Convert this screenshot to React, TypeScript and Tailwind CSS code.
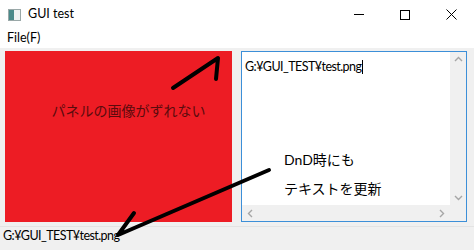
import React from "react";

const font = { fontFamily: 'Lato, "Noto Sans CJK JP", sans-serif' };

function TitleBar() {
  return (
    <div className="flex h-[29px] items-center bg-white">
      <div className="ml-[8px] flex h-[12px] w-[13px] items-stretch border border-[#9aa8a8] bg-[#dfe6e6]">
        <div className="w-[5px] bg-[#4a8a8a]" />
        <div className="flex-1 bg-[#eef2f2]" />
      </div>
      <span className="ml-[7px] text-[12.5px] text-black">GUI test</span>
      <div className="ml-auto flex h-full items-center">
        <div className="flex w-[46px] justify-center">
          <div className="h-px w-[10px] bg-black" />
        </div>
        <div className="flex w-[46px] justify-center">
          <div className="h-[10px] w-[10px] border border-black" />
        </div>
        <div className="flex w-[46px] justify-center">
          <svg width="11" height="11" viewBox="0 0 11 11">
            <path d="M0.5 0.5 L10.5 10.5 M10.5 0.5 L0.5 10.5" stroke="#000" strokeWidth="1" />
          </svg>
        </div>
      </div>
    </div>
  );
}

function Chevron({ dir }: { dir: "up" | "down" | "left" | "right" }) {
  const d = {
    up: "M1 6 L4.5 2.5 L8 6",
    down: "M1 3 L4.5 6.5 L8 3",
    left: "M6 1 L2.5 4.5 L6 8",
    right: "M3 1 L6.5 4.5 L3 8",
  }[dir];
  return (
    <svg width="9" height="9" viewBox="0 0 9 9">
      <path d={d} fill="none" stroke="#a6a6a6" strokeWidth="1.4" />
    </svg>
  );
}

function TextBox() {
  return (
    <div className="flex h-[171px] flex-1 flex-col border border-[#3c8fd8] bg-white">
      <div className="flex flex-1">
        <div className="relative flex-1 px-[3px] pt-[1px]">
          <span className="text-[12.5px] leading-[16px] tracking-[-0.55px] text-black">G:¥GUI_TEST¥test.png</span>
          <span className="ml-px inline-block h-[14px] w-px translate-y-[3px] bg-black" />
          <div className="absolute left-[42px] top-[93px] text-[14px] leading-[29px] text-black">
            <div>DnD時にも</div>
            <div>テキストを更新</div>
          </div>
        </div>
        <div className="flex w-[16px] flex-col items-center justify-between bg-[#f0f0f0] py-[3px]">
          <Chevron dir="up" />
          <Chevron dir="down" />
        </div>
      </div>
      <div className="flex h-[16px]">
        <div className="flex flex-1 items-center justify-between bg-[#f0f0f0] px-[4px]">
          <Chevron dir="left" />
          <Chevron dir="right" />
        </div>
        <div className="w-[16px] bg-[#f0f0f0]" />
      </div>
    </div>
  );
}

function Arrows() {
  return (
    <svg className="pointer-events-none absolute left-0 top-0" width="474" height="250" viewBox="0 0 474 250">
      <g fill="none" stroke="#000" strokeWidth="4" strokeLinecap="round" strokeLinejoin="round">
        <path d="M173 88 L218 58 L216 79" />
        <path d="M269 170 L118 235 L134 213" />
      </g>
    </svg>
  );
}

export default function App() {
  return (
    <div className="relative h-[250px] w-[474px] overflow-hidden bg-[#f0f0f0]" style={font}>
      <TitleBar />
      <div className="flex h-[19px] items-center bg-white pl-[7px] text-[12.5px] text-black">File(F)</div>
      <div className="flex items-start gap-[9px] pl-[5px] pr-[7px] pt-[3px]">
        <div className="flex h-[171px] w-[227px] items-start justify-center bg-[#ed1c24] pl-[20px] pt-[49px]">
          <span className="text-[14px] text-[#5a0b0d]">パネルの画像がずれない</span>
        </div>
        <TextBox />
      </div>
      <div className="mt-[4px] flex h-[20px] items-center border-t border-[#e3e3e3] pl-[3px] text-[12.5px] tracking-[-0.55px] text-black">
        G:¥GUI_TEST¥test.png
      </div>
      <Arrows />
    </div>
  );
}
